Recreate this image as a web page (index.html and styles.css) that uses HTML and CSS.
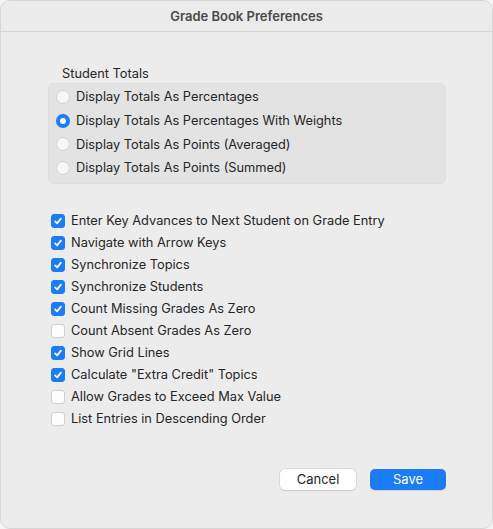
FILE: index.html
```html
<!DOCTYPE html>
<html>
<head>
<meta charset="utf-8">
<link rel="stylesheet" href="styles.css">
</head>
<body>
<div class="window">
  <div class="titlebar">Grade Book Preferences</div>
  <div class="content">
    <div class="section-label">Student Totals</div>
    <div class="group">
      <label class="radio-row"><span class="radio"></span>Display Totals As Percentages</label>
      <label class="radio-row"><span class="radio on"></span>Display Totals As Percentages With Weights</label>
      <label class="radio-row"><span class="radio"></span>Display Totals As Points (Averaged)</label>
      <label class="radio-row"><span class="radio"></span>Display Totals As Points (Summed)</label>
    </div>
    <div class="checks">
      <label class="check-row"><span class="box on"><svg viewBox="0 0 14 14"><path d="M3.6 7.4 L6 9.8 L10.4 4.2"/></svg></span>Enter Key Advances to Next Student on Grade Entry</label>
      <label class="check-row"><span class="box on"><svg viewBox="0 0 14 14"><path d="M3.6 7.4 L6 9.8 L10.4 4.2"/></svg></span>Navigate with Arrow Keys</label>
      <label class="check-row"><span class="box on"><svg viewBox="0 0 14 14"><path d="M3.6 7.4 L6 9.8 L10.4 4.2"/></svg></span>Synchronize Topics</label>
      <label class="check-row"><span class="box on"><svg viewBox="0 0 14 14"><path d="M3.6 7.4 L6 9.8 L10.4 4.2"/></svg></span>Synchronize Students</label>
      <label class="check-row"><span class="box on"><svg viewBox="0 0 14 14"><path d="M3.6 7.4 L6 9.8 L10.4 4.2"/></svg></span>Count Missing Grades As Zero</label>
      <label class="check-row"><span class="box"></span>Count Absent Grades As Zero</label>
      <label class="check-row"><span class="box on"><svg viewBox="0 0 14 14"><path d="M3.6 7.4 L6 9.8 L10.4 4.2"/></svg></span>Show Grid Lines</label>
      <label class="check-row"><span class="box on"><svg viewBox="0 0 14 14"><path d="M3.6 7.4 L6 9.8 L10.4 4.2"/></svg></span>Calculate "Extra Credit" Topics</label>
      <label class="check-row"><span class="box"></span>Allow Grades to Exceed Max Value</label>
      <label class="check-row"><span class="box"></span>List Entries in Descending Order</label>
    </div>
    <div class="buttons">
      <button class="btn">Cancel</button>
      <button class="btn primary">Save</button>
    </div>
  </div>
</div>
</body>
</html>
```
FILE: styles.css
```css
html, body {
  margin: 0;
  padding: 0;
  background: #f4f4f4;
}
body {
  font-family: Inter, "Liberation Sans", sans-serif;
  font-size: 12.8px;
  color: #262626;
}
.window {
  box-sizing: border-box;
  width: 493px;
  height: 529px;
  background: #ececec;
  border: 1px solid #d6d6d6;
  border-radius: 10px;
  overflow: hidden;
}
.titlebar {
  height: 30px;
  line-height: 30px;
  text-align: center;
  font-weight: 600;
  font-size: 13px;
  color: #4a4a4a;
  background: #ebebeb;
  border-bottom: 1px solid #d5d5d5;
}
.content {
  padding: 34px 46px 0 47px;
}
.section-label {
  margin-left: 14px;
  height: 16px;
  line-height: 16px;
}
.group {
  margin-top: 1px;
  background: #e3e3e3;
  border: 1px solid #dedede;
  border-radius: 6px;
  padding: 1px 0 3px 7px;
  display: flex;
  flex-direction: column;
}
.radio-row {
  display: flex;
  align-items: center;
  gap: 6px;
  height: 23.7px;
}
.radio {
  box-sizing: border-box;
  width: 14px;
  height: 14px;
  border-radius: 50%;
  background: #f7f7f7;
  border: 1px solid #d2d2d2;
}
.radio.on {
  border: 4px solid #1b7cf3;
  background: #ffffff;
}
.checks {
  margin-top: 26px;
  margin-left: 3px;
  display: flex;
  flex-direction: column;
}
.check-row {
  display: flex;
  align-items: center;
  gap: 6px;
  height: 22px;
}
.box {
  box-sizing: border-box;
  width: 14px;
  height: 14px;
  border-radius: 3px;
  background: #fdfdfd;
  border: 1px solid #d0d0d0;
  display: flex;
}
.box.on {
  background: #1b7cf3;
  border-color: #1b7cf3;
}
.box svg {
  width: 12px;
  height: 12px;
}
.box path {
  fill: none;
  stroke: #ffffff;
  stroke-width: 2;
  stroke-linecap: round;
  stroke-linejoin: round;
}
.buttons {
  margin-top: 39px;
  display: flex;
  justify-content: flex-end;
  gap: 14px;
}
.btn {
  width: 76px;
  height: 21px;
  border-radius: 5px;
  border: none;
  background: #ffffff;
  box-shadow: 0 0 0 0.5px #c8c8c8, 0 1px 1px rgba(0,0,0,0.12);
  font-family: Inter, "Liberation Sans", sans-serif;
  font-size: 13px;
  color: #262626;
  padding: 0;
}
.btn.primary {
  background: #1b7cf3;
  color: #ffffff;
  box-shadow: 0 1px 1px rgba(0,0,0,0.12);
}
```
